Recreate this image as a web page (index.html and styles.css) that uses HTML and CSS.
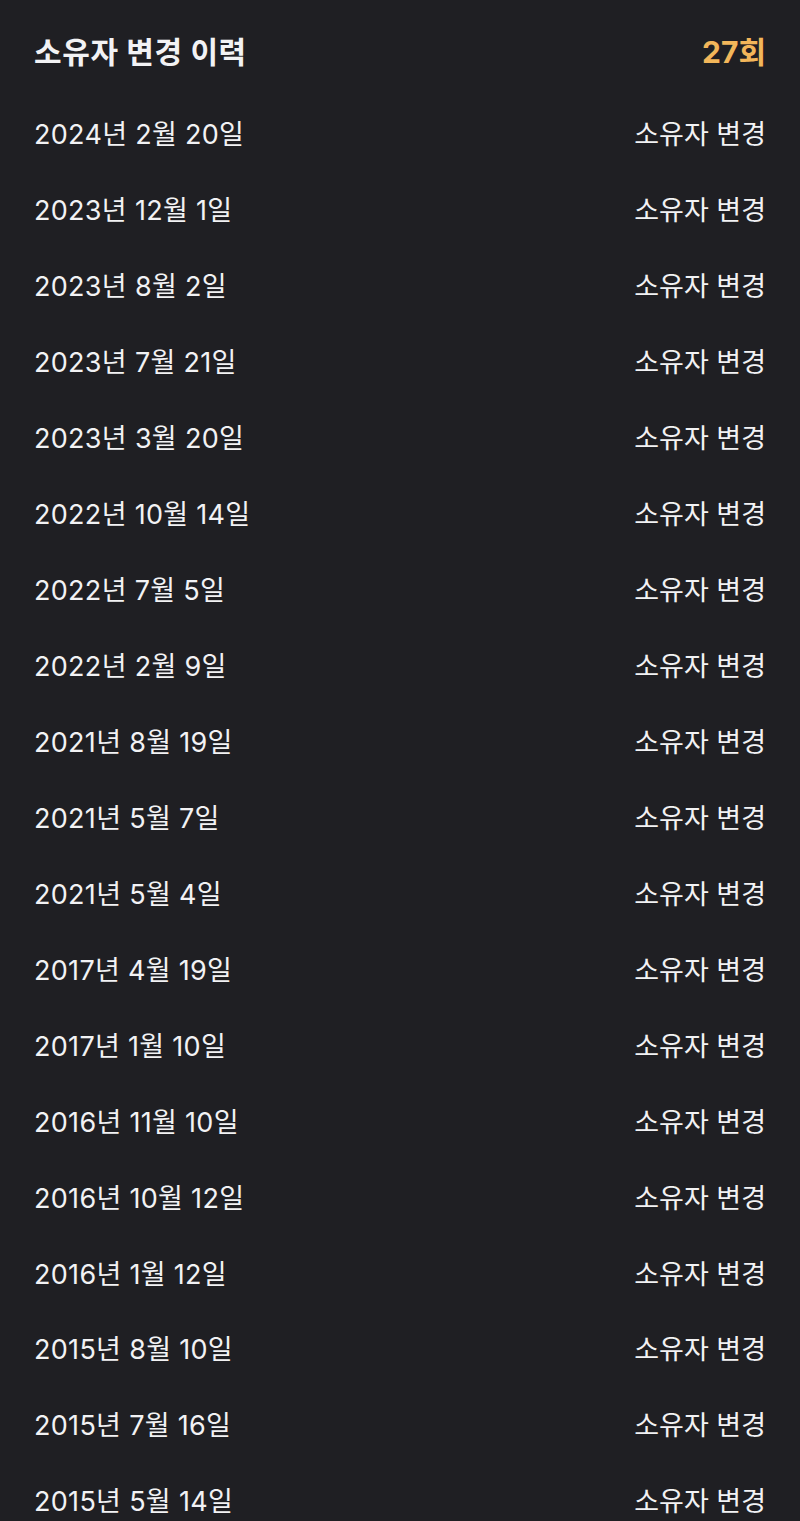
FILE: index.html
```html
<!DOCTYPE html>
<html lang="ko">
<head>
  <meta charset="UTF-8">
  <meta name="viewport" content="width=device-width, initial-scale=1.0">
  <title>소유자 변경 이력</title>
  <link rel="stylesheet" href="styles.css">
</head>
<body>
  <section class="historico">
    <header class="historico-topo">
      <h2>소유자 변경 이력</h2>
      <span class="contagem">27회</span>
    </header>
    <ul class="lista" id="lista"></ul>
  </section>
  <script>
    const datas = [
      "2024년 2월 20일", "2023년 12월 1일", "2023년 8월 2일", "2023년 7월 21일",
      "2023년 3월 20일", "2022년 10월 14일", "2022년 7월 5일", "2022년 2월 9일",
      "2021년 8월 19일", "2021년 5월 7일", "2021년 5월 4일", "2017년 4월 19일",
      "2017년 1월 10일", "2016년 11월 10일", "2016년 10월 12일", "2016년 1월 12일",
      "2015년 8월 10일", "2015년 7월 16일", "2015년 5월 14일"
    ];
    const lista = document.getElementById('lista');
    datas.forEach(data => {
      const li = document.createElement('li');
      li.className = 'linha';
      li.innerHTML = `<span class="data">${data}</span><span class="tipo">소유자 변경</span>`;
      lista.appendChild(li);
    });
  </script>
</body>
</html>
```

FILE: styles.css
```css
:root {
  --fundo: #1f1f23;
  --texto: #f2f2f4;
  --destaque: #f2b65a;
}
* {
  margin: 0;
  padding: 0;
  box-sizing: border-box;
}
body {
  font-family: Inter, "Noto Sans CJK KR", sans-serif;
  background-color: var(--fundo);
  color: var(--texto);
}
.historico {
  padding: 0 34px;
}
.historico-topo {
  height: 95px;
  padding-top: 4px;
  display: flex;
  justify-content: space-between;
  align-items: center;
}
.historico-topo h2 {
  font-size: 30px;
  font-weight: 700;
  letter-spacing: 0.6px;
}
.contagem {
  font-size: 30px;
  font-weight: 700;
  color: var(--destaque);
}
.lista {
  list-style: none;
}
.linha {
  height: 75.95px;
  display: flex;
  justify-content: space-between;
  align-items: center;
  font-size: 27px;
}
.data {
  letter-spacing: 0.3px;
}
```
